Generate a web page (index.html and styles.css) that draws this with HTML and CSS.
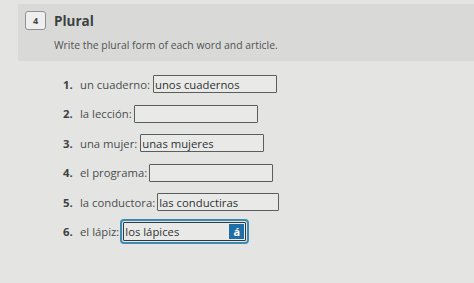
FILE: index.html
```html
<!DOCTYPE html>
<html lang="es">
<head>
<meta charset="UTF-8">
<title>Plural</title>
<link rel="stylesheet" href="styles.css">
</head>
<body>
<div class="question">
    <div class="header">
        <div class="title-row">
            <span class="badge">4</span>
            <span class="title">Plural</span>
        </div>
        <p class="prompt">Write the plural form of each word and article.</p>
    </div>

    <ol class="items">
        <li class="item one">
            <span class="num">1.</span>
            <span class="label">un cuaderno:</span>
            <span class="field">unos cuadernos</span>
        </li>
        <li class="item two">
            <span class="num">2.</span>
            <span class="label">la lección:</span>
            <span class="field"></span>
        </li>
        <li class="item three">
            <span class="num">3.</span>
            <span class="label">una mujer:</span>
            <span class="field">unas mujeres</span>
        </li>
        <li class="item four">
            <span class="num">4.</span>
            <span class="label">el programa:</span>
            <span class="field"></span>
        </li>
        <li class="item five">
            <span class="num">5.</span>
            <span class="label">la conductora:</span>
            <span class="field short">las conductiras</span>
        </li>
        <li class="item six">
            <span class="num">6.</span>
            <span class="label">el lápiz:</span>
            <span class="field focused">los lápices<span class="accent">á</span></span>
        </li>
    </ol>
</div>
</body>
</html>
```

FILE: styles.css
```css
body {
  margin: 0;
  background-color: #e4e5e3;
  font-family: 'Open Sans', 'Liberation Sans', sans-serif;
  color: #4a4c4d;
}

.question {
  padding-top: 4px;
  padding-left: 18px;
}

.header {
  background-color: #d9dad8;
  height: 57px;
  padding-left: 7px;
  box-sizing: border-box;
  padding-top: 7px;
}

.title-row {
  display: flex;
  align-items: center;
  gap: 8px;
}

.badge {
  width: 21px;
  height: 19px;
  box-sizing: border-box;
  border: 1.5px solid #8f9190;
  border-radius: 3px;
  background-color: #eeefee;
  font-size: 9px;
  font-weight: bold;
  display: flex;
  align-items: center;
  justify-content: center;
  color: #444;
}

.title {
  font-size: 13.5px;
  font-weight: bold;
  color: #3e4142;
}

.prompt {
  margin: 8px 0 0 29px;
  font-size: 10.4px;
  color: #505354;
}

.items {
  list-style: none;
  margin: 14px 0 0 0;
  padding: 0 0 0 45px;
}

.item {
  display: flex;
  align-items: center;
  height: 18px;
  margin-bottom: 11.5px;
  font-size: 11.3px;
}

.num {
  font-weight: bold;
  width: 17px;
  color: #3e4142;
}

.label {
  margin-right: 2px;
}

.field {
  display: flex;
  align-items: center;
  box-sizing: border-box;
  width: 124px;
  height: 18px;
  border: 1.5px solid #5a5d5e;
  border-radius: 1px;
  background-color: #e9eae8;
  padding-left: 1px;
  color: #2f3233;
}

.field.short { width: 122px; }

.item.one .field { margin-left: 1px; }
.item.three .field { margin-left: 1px; }

.field.focused {
  width: 123px;
  height: 19px;
  margin-left: 2px;
  outline: 2px solid #3d8ab3;
  outline-offset: 1px;
  justify-content: space-between;
  border-color: #2c3a42;
}

.accent {
  background-color: #1f6fa6;
  color: #fff;
  font-weight: bold;
  width: 15px;
  height: 15px;
  display: flex;
  align-items: center;
  justify-content: center;
  font-size: 11px;
  margin-right: 1px;
}
```
